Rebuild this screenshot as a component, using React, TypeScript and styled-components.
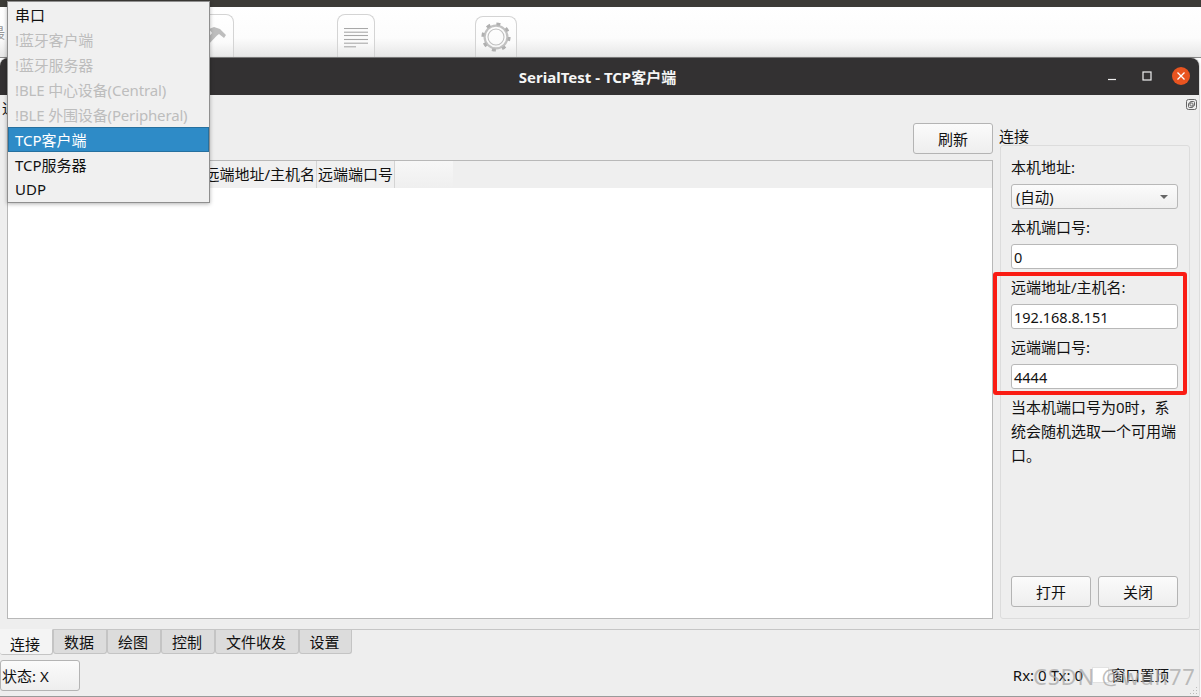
import React from "react";
import styled, { createGlobalStyle } from "styled-components";

const Global = createGlobalStyle`
  html, body { margin: 0; padding: 0; background: #fff; }
  #root { width: 1201px; height: 697px; overflow: hidden; }
  * { box-sizing: border-box; }
`;

const Page = styled.div`
  position: relative;
  width: 1201px;
  height: 697px;
  display: flex;
  flex-direction: column;
  overflow: hidden;
  background: #fff;
  color: #111;
  font: 15px "Noto Sans", "Noto Sans CJK SC", sans-serif;
`;
const TopStrip = styled.div`
  height: 7px;
  flex: none;
  background: #3c3b37;
`;
const Toolbar = styled.div`
  height: 51px;
  flex: none;
  display: flex;
  align-items: flex-end;
  overflow: hidden;
  background: linear-gradient(#fff 0, #fcfcfc 62%, #e6e6e6 100%);
  border-bottom: 1px solid #8a8a8a;
`;
const ClippedGlyph = styled.span`
  width: 5px;
  margin-right: 191px;
  overflow: hidden;
  direction: rtl;
  white-space: nowrap;
  align-self: center;
  color: #999;
  font-size: 14px;
`;
const Tile = styled.div<{ $w: number; $h: number; $mr: number }>`
  width: ${(p) => p.$w}px;
  height: ${(p) => p.$h}px;
  margin-right: ${(p) => p.$mr}px;
  display: flex;
  align-items: flex-start;
  justify-content: center;
  border: 1px solid #d4d4d4;
  border-bottom: 0;
  border-radius: 8px 8px 0 0;
  background: linear-gradient(#fff, #fbfbfb 65%, #e8e8e8);
`;
const Window = styled.div`
  flex: 1;
  width: 1199px;
  display: flex;
  flex-direction: column;
  min-height: 0;
  background: #eee;
  border-bottom: 1px solid #9a9a9a;
  border-radius: 8px 8px 0 0;
  box-shadow: 0 0 2px rgba(0, 0, 0, 0.5);
`;
const TitleBar = styled.div`
  position: relative;
  height: 37px;
  flex: none;
  display: flex;
  align-items: center;
  justify-content: center;
  padding-right: 4px;
  background: #333132;
  border-radius: 8px 8px 0 0;
  color: #f5f5f5;
  font-size: 15px;
  font-weight: 700;
`;
const TitleControls = styled.div`
  position: absolute;
  right: 9px;
  top: 9px;
  display: flex;
  align-items: center;
`;
const CtlBtn = styled.div<{ $mr: number }>`
  width: 18px;
  height: 18px;
  margin-right: ${(p) => p.$mr}px;
  display: flex;
  align-items: center;
  justify-content: center;
`;
const CloseBtn = styled(CtlBtn)`
  border-radius: 50%;
  background: #e95420;
`;
const HeadRow = styled.div`
  height: 28px;
  flex: none;
  display: flex;
  justify-content: space-between;
  padding: 4px 2px 0 2px;
`;
const HiddenLabel = styled.span`
  width: 6px;
  overflow: hidden;
  white-space: nowrap;
  line-height: 18px;
`;
const Main = styled.div`
  height: 496px;
  flex: none;
  display: grid;
  grid-template-columns: 986px 190px;
  column-gap: 7px;
  padding-left: 7px;
`;
const LeftCol = styled.div`
  display: flex;
  flex-direction: column;
  min-width: 0;
`;
const RefreshRow = styled.div`
  display: flex;
  justify-content: flex-end;
  margin-bottom: 6px;
`;
const PushButton = styled.button<{ $w?: number }>`
  width: ${(p) => p.$w ?? 80}px;
  height: 31px;
  padding: 0;
  border: 1px solid #b4b4b4;
  border-radius: 3px;
  background: linear-gradient(#fbfbfb, #eeeeee);
  color: #111;
  font: inherit;
`;
const Table = styled.div`
  flex: 1;
  display: flex;
  flex-direction: column;
  border: 1px solid #b8b8b8;
  background: #fff;
`;
const HeaderRow = styled.div`
  height: 27px;
  flex: none;
  display: flex;
  background: #efefef;
  padding-left: 190px;
`;
const HeaderCell = styled.div<{ $w: number }>`
  width: ${(p) => p.$w}px;
  padding-right: 1px;
  text-align: right;
  line-height: 26px;
  white-space: nowrap;
  background: #f0f0f0;
  border-right: 1px solid #d4d4d4;
  &:last-child {
    border-right: 0;
    background: linear-gradient(#f7f7f7, #efefef);
  }
`;
const RightCol = styled.div`
  position: relative;
  display: flex;
  flex-direction: column;
  min-height: 0;
`;
const GroupTitle = styled.div`
  height: 22px;
  margin-left: -1px;
  line-height: 27px;
  white-space: nowrap;
  flex: none;
`;
const GroupBox = styled.div`
  flex: 1;
  display: flex;
  flex-direction: column;
  padding: 12px 11px 11px 10px;
  border: 1px solid #dcdcdc;
  border-radius: 3px;
`;
const FieldLabel = styled.div`
  height: 20px;
  margin-bottom: 6px;
  line-height: 18px;
  white-space: nowrap;
`;
const TextField = styled.div`
  height: 25px;
  margin-bottom: 9px;
  padding-left: 2px;
  font-size: 14.5px;
  line-height: 24px;
  border: 1px solid #b8b8b8;
  border-radius: 3px;
  background: #fff;
`;
const Combo = styled(TextField)`
  display: flex;
  align-items: center;
  justify-content: space-between;
  padding: 0 9px 0 4px;
  background: linear-gradient(#fbfbfb, #efefef);
`;
const Caret = styled.span`
  width: 0;
  height: 0;
  border: 4px solid transparent;
  border-top: 4px solid #666;
  border-bottom: 0;
`;
const RemoteFields = styled.div`
  position: relative;
`;
const RedBox = styled.div`
  position: absolute;
  left: -18px;
  right: -9px;
  top: -6px;
  bottom: 3px;
  border: 4px solid #fa1c14;
  border-radius: 3px;
  pointer-events: none;
`;
const Help = styled.div`
  margin-top: -3px;
  line-height: 24px;
  flex: 1;
`;
const ButtonRow = styled.div`
  display: flex;
  justify-content: space-between;
`;
const TabBar = styled.div`
  height: 38px;
  margin-top: 10px;
  flex: none;
  display: flex;
  align-items: flex-start;
  border-top: 1px solid #c6c6c6;
`;
const Tab = styled.div<{ $w: number; $active?: boolean }>`
  width: ${(p) => p.$w}px;
  height: ${(p) => (p.$active ? 26 : 24)}px;
  margin-top: ${(p) => (p.$active ? -1 : 0)}px;
  padding-right: 2px;
  text-align: center;
  line-height: ${(p) => (p.$active ? 28 : 25)}px;
  white-space: nowrap;
  background: ${(p) => (p.$active ? "#f4f4f4" : "#dcdcdc")};
  border: 1px solid #c4c4c4;
  border-top: ${(p) => (p.$active ? "1px solid #f4f4f4" : "0")};
  border-left: ${(p) => (p.$active ? "0" : "1px solid #c4c4c4")};
  border-radius: 0 0 3px 3px;
`;
const StatusBar = styled.div`
  position: relative;
  flex: 1;
  display: flex;
  align-items: flex-start;
  justify-content: space-between;
  min-height: 0;
`;
const StatusButton = styled.div`
  width: 80px;
  height: 31px;
  margin-top: -7px;
  padding-left: 1px;
  line-height: 30px;
  white-space: nowrap;
  border: 1px solid #b4b4b4;
  border-radius: 3px;
  background: linear-gradient(#fbfbfb, #eeeeee);
`;
const StatusRight = styled.div`
  margin-top: -2px;
  display: flex;
  align-items: center;
  padding-right: 30px;
  font-size: 14.5px;
  line-height: 20px;
  white-space: nowrap;
`;
const Counters = styled.span`
  font-size: 15px;
`;
const Check = styled.span`
  width: 17px;
  height: 16px;
  margin: 0 2px 0 9px;
  background: #fff;
  border: 1px solid #e2e2e2;
`;
const Grip = styled.svg`
  position: absolute;
  right: 1px;
  bottom: 1px;
`;
const Watermark = styled.div`
  position: absolute;
  left: 1033px;
  top: 662px;
  color: rgba(165, 165, 165, 0.72);
  font-size: 22px;
  line-height: 28px;
  letter-spacing: 0.8px;
  white-space: nowrap;
  pointer-events: none;
`;
const Menu = styled.div`
  position: absolute;
  left: 7px;
  top: 1px;
  width: 203px;
  height: 202px;
  padding: 0;
  background: #f0f0f0;
  border: 1px solid #8f8f8f;
  box-shadow: 0 1px 4px rgba(0, 0, 0, 0.3);
`;
const MenuItem = styled.div<{ $state?: "off" | "on" }>`
  height: 25px;
  padding-left: 7px;
  line-height: 27px;
  white-space: nowrap;
  letter-spacing: ${(p) => (p.$state === "off" ? "-0.15px" : "0")};
  color: ${(p) => (p.$state === "off" ? "#bdbdbd" : p.$state === "on" ? "#fff" : "#111")};
  background: ${(p) => (p.$state === "on" ? "#2e8bc7" : "transparent")};
  box-shadow: ${(p) => (p.$state === "on" ? "inset 0 0 0 1px #26709f" : "none")};
  &:last-child {
    line-height: 25px;
  }
`;

const Hammer = () => (
  <svg width="36" height="40" viewBox="0 0 36 40" fill="#bdbdbd">
    <path d="M12 14 L17 12 L23 14 L29 20 L27 23 L22 19 L20 20.5 L8 33 L5 30 L15 18 Z" />
  </svg>
);
const DocLines = () => (
  <svg width="24" height="20" viewBox="0 0 24 20" stroke="#a8a8a8" strokeWidth="1.1" style={{ marginTop: 13 }}>
    {[0.5, 4.2, 7.5, 11.5, 15.2].map((y) => (
      <line key={y} x1="0" x2="24" y1={y} y2={y} />
    ))}
    <line x1="0" x2="12" y1="18.8" y2="18.8" />
  </svg>
);
const Gear = () => (
  <svg width="30" height="30" viewBox="0 0 30 30" fill="none" style={{ marginTop: 5 }}>
    <circle cx="15" cy="15" r="11.4" stroke="#c2c2c2" strokeWidth="2.2" />
    <circle cx="15" cy="15" r="8" stroke="#c0c0c0" strokeWidth="1.1" />
    <circle cx="15" cy="15" r="13.2" stroke="#b0b0b0" strokeWidth="2.8" strokeDasharray="4 6.37" />
  </svg>
);

const tabs = [
  { t: "连接", w: 53, active: true },
  { t: "数据", w: 54 },
  { t: "绘图", w: 54 },
  { t: "控制", w: 54 },
  { t: "文件收发", w: 84 },
  { t: "设置", w: 53 },
];
const menu: { t: string; s?: "off" | "on" }[] = [
  { t: "串口" },
  { t: "!蓝牙客户端", s: "off" },
  { t: "!蓝牙服务器", s: "off" },
  { t: "!BLE 中心设备(Central)", s: "off" },
  { t: "!BLE 外围设备(Peripheral)", s: "off" },
  { t: "TCP客户端", s: "on" },
  { t: "TCP服务器" },
  { t: "UDP" },
];

export default function App() {
  return (
    <Page>
      <Global />
      <TopStrip />
      <Toolbar>
        <ClippedGlyph>最</ClippedGlyph>
        <Tile $w={38} $h={43} $mr={103}>
          <Hammer />
        </Tile>
        <Tile $w={38} $h={43} $mr={100}>
          <DocLines />
        </Tile>
        <Tile $w={42} $h={41} $mr={0}>
          <Gear />
        </Tile>
      </Toolbar>
      <Window>
        <TitleBar>
          SerialTest - TCP客户端
          <TitleControls>
            <CtlBtn $mr={17}>
              <svg width="10" height="10" viewBox="0 0 10 10" stroke="#eee" strokeWidth="1.2">
                <line x1="1" x2="9" y1="8.5" y2="8.5" />
              </svg>
            </CtlBtn>
            <CtlBtn $mr={16}>
              <svg width="10" height="10" viewBox="0 0 10 10" fill="none" stroke="#eee" strokeWidth="1.2">
                <rect x="1" y="1" width="8" height="8" />
              </svg>
            </CtlBtn>
            <CloseBtn $mr={0}>
              <svg width="10" height="10" viewBox="0 0 10 10" stroke="#fff" strokeWidth="1.3">
                <path d="M1.5 1.5 L8.5 8.5 M8.5 1.5 L1.5 8.5" />
              </svg>
            </CloseBtn>
          </TitleControls>
        </TitleBar>
        <HeadRow>
          <HiddenLabel>通信</HiddenLabel>
          <svg width="11" height="11" viewBox="0 0 11 11" fill="none" stroke="#666" strokeWidth="1">
            <rect x="0.5" y="0.5" width="10" height="10" rx="2" />
            <rect x="4" y="2.5" width="4.5" height="4.5" rx="1" />
            <rect x="2.5" y="4" width="4.5" height="4.5" rx="1" />
          </svg>
        </HeadRow>
        <Main>
          <LeftCol>
            <RefreshRow>
              <PushButton>刷新</PushButton>
            </RefreshRow>
            <Table>
              <HeaderRow>
                <HeaderCell $w={119}>远端地址/主机名</HeaderCell>
                <HeaderCell $w={78}>远端端口号</HeaderCell>
                <HeaderCell $w={58} />
              </HeaderRow>
            </Table>
          </LeftCol>
          <RightCol>
            <GroupTitle>连接</GroupTitle>
            <GroupBox>
              <FieldLabel>本机地址:</FieldLabel>
              <Combo>
                (自动)
                <Caret />
              </Combo>
              <FieldLabel>本机端口号:</FieldLabel>
              <TextField>0</TextField>
              <RemoteFields>
                <FieldLabel>远端地址/主机名:</FieldLabel>
                <TextField>192.168.8.151</TextField>
                <FieldLabel>远端端口号:</FieldLabel>
                <TextField>4444</TextField>
                <RedBox />
              </RemoteFields>
              <Help>当本机端口号为0时，系统会随机选取一个可用端口。</Help>
              <ButtonRow>
                <PushButton>打开</PushButton>
                <PushButton>关闭</PushButton>
              </ButtonRow>
            </GroupBox>
          </RightCol>
        </Main>
        <TabBar>
          {tabs.map((t) => (
            <Tab key={t.t} $w={t.w} $active={t.active}>
              {t.t}
            </Tab>
          ))}
        </TabBar>
        <StatusBar>
          <StatusButton>状态: X</StatusButton>
          <StatusRight>
            <Counters>Rx: 0 Tx: 0</Counters>
            <Check />
            窗口置顶
          </StatusRight>
          <Grip width="9" height="9" viewBox="0 0 9 9" fill="#bbb">
            <rect x="7" y="1" width="1" height="1" />
            <rect x="4" y="4" width="1" height="1" />
            <rect x="7" y="4" width="1" height="1" />
            <rect x="1" y="7" width="1" height="1" />
            <rect x="4" y="7" width="1" height="1" />
            <rect x="7" y="7" width="1" height="1" />
          </Grip>
        </StatusBar>
      </Window>
      <Watermark>CSDN @wuh77</Watermark>
      <Menu>
        {menu.map((m) => (
          <MenuItem key={m.t} $state={m.s}>
            {m.t}
          </MenuItem>
        ))}
      </Menu>
    </Page>
  );
}
